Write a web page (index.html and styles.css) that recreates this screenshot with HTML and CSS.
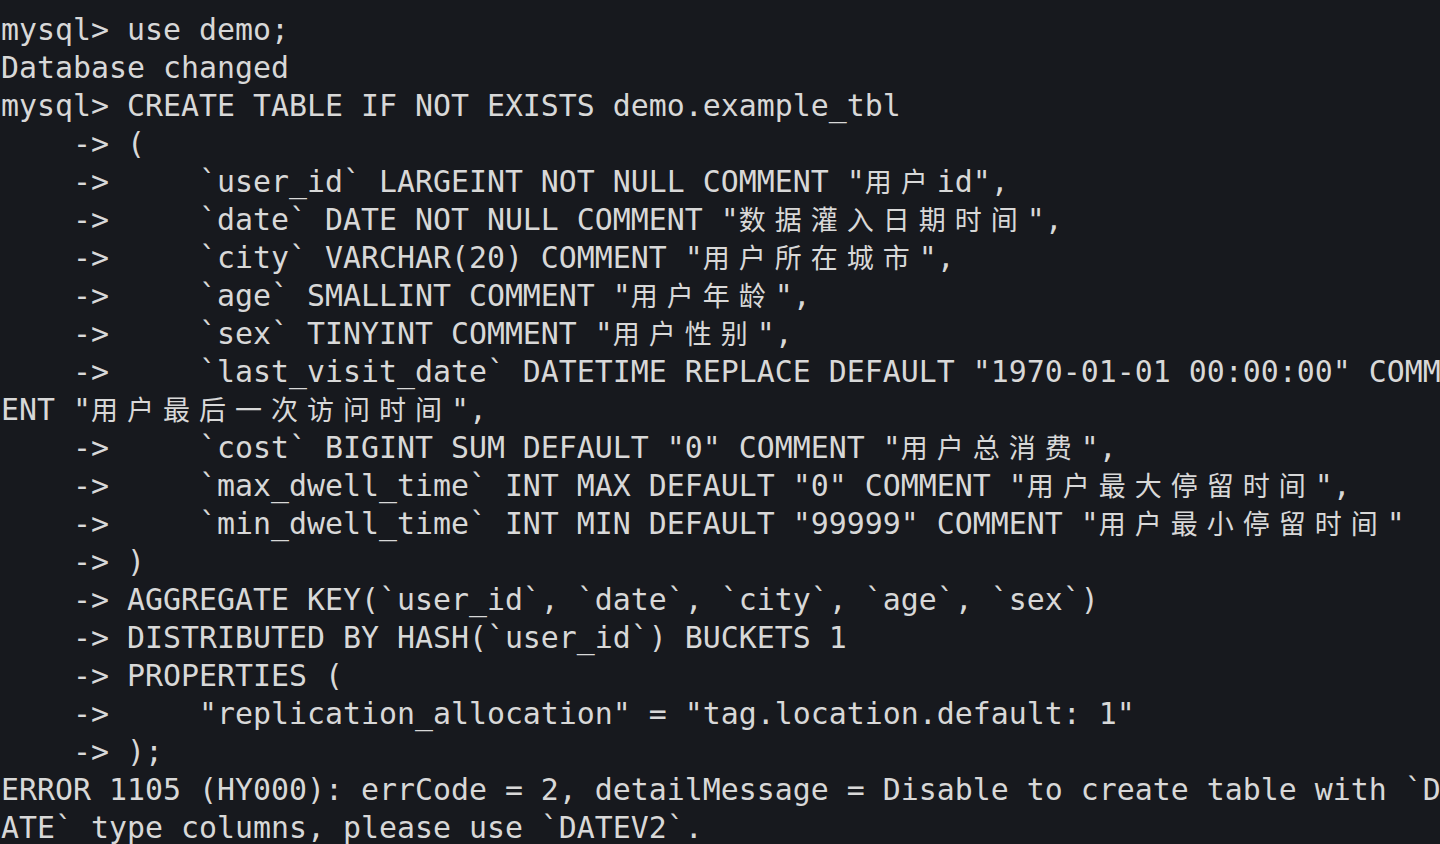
FILE: index.html
```html
<!DOCTYPE html>
<html lang="zh-CN">
<head>
  <meta charset="UTF-8">
  <meta name="viewport" content="width=device-width, initial-scale=1.0">
  <link rel="stylesheet" href="styles.css">
</head>
<body>
<pre class="terminal">mysql&gt; use demo;
Database changed
mysql&gt; CREATE TABLE IF NOT EXISTS demo.example_tbl
    -&gt; (
    -&gt;     `user_id` LARGEINT NOT NULL COMMENT "<span class="cjk">用户</span>id",
    -&gt;     `date` DATE NOT NULL COMMENT "<span class="cjk">数据灌入日期时间</span>",
    -&gt;     `city` VARCHAR(20) COMMENT "<span class="cjk">用户所在城市</span>",
    -&gt;     `age` SMALLINT COMMENT "<span class="cjk">用户年龄</span>",
    -&gt;     `sex` TINYINT COMMENT "<span class="cjk">用户性别</span>",
    -&gt;     `last_visit_date` DATETIME REPLACE DEFAULT "1970-01-01 00:00:00" COMM
ENT "<span class="cjk">用户最后一次访问时间</span>",
    -&gt;     `cost` BIGINT SUM DEFAULT "0" COMMENT "<span class="cjk">用户总消费</span>",
    -&gt;     `max_dwell_time` INT MAX DEFAULT "0" COMMENT "<span class="cjk">用户最大停留时间</span>",
    -&gt;     `min_dwell_time` INT MIN DEFAULT "99999" COMMENT "<span class="cjk">用户最小停留时间</span>"
    -&gt; )
    -&gt; AGGREGATE KEY(`user_id`, `date`, `city`, `age`, `sex`)
    -&gt; DISTRIBUTED BY HASH(`user_id`) BUCKETS 1
    -&gt; PROPERTIES (
    -&gt;     "replication_allocation" = "tag.location.default: 1"
    -&gt; );
ERROR 1105 (HY000): errCode = 2, detailMessage = Disable to create table with `D
ATE` type columns, please use `DATEV2`.</pre>
</body>
</html>
```

FILE: styles.css
```css
html, body {
  margin: 0;
  background-color: #17191e;
  height: 100%;
  overflow: hidden;
}
.terminal {
  margin: 0;
  padding: 11px 0 0 1px;
  font-family: "DejaVu Sans Mono", "Liberation Mono", monospace;
  font-size: 29.9px;
  line-height: 38px;
  color: #d8d8d8;
  white-space: pre;
}
.cjk {
  font-family: "Noto Sans CJK SC", sans-serif;
  font-size: 27px;
  letter-spacing: 9px;
  line-height: 16px;
}
```
